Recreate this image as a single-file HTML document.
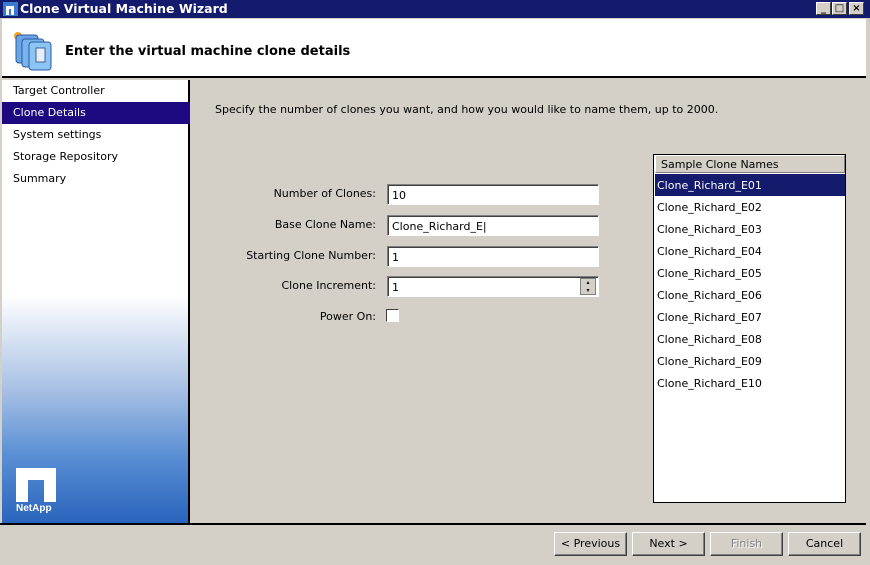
<!DOCTYPE html>
<html><head><style>
*{margin:0;padding:0;box-sizing:border-box}
body{width:870px;height:565px;background:#d4d0c8;font-family:"DejaVu Sans","Liberation Sans",sans-serif;font-size:11px;position:relative;overflow:hidden;color:#000}
.a{position:absolute}
.tb{left:0;top:0;width:870px;height:18px;background:#141a6c;color:#fff;font-weight:bold;font-size:12.5px;line-height:18px;padding-left:20px}
.wb{top:2px;width:15px;height:13px;background:#d4d0c8;border:1px solid;border-color:#fff #404040 #404040 #fff;font-size:10px;color:#000;text-align:center;line-height:11px;font-weight:bold}
.hdr{left:2px;top:19px;width:864px;height:59px;background:#fff;border-bottom:2px solid #000}
.side{left:2px;top:80px;width:188px;height:443px;background:linear-gradient(#fff 0,#fff 215px,#a7c0e4 310px,#5a8fd4 375px,#2a65bd 443px);border-right:2px solid #000}
.it{left:2px;width:188px;height:22px;line-height:22px;padding-left:11px}
.lbl{text-align:right;width:150px;left:226px}
.in{left:387px;width:212px;height:21px;background:#fff;border:1px solid;border-color:#808080 #fff #fff #808080;box-shadow:inset 1px 1px 0 #404040;padding:4px 0 0 4px}
.btn{top:532px;width:73px;height:24px;border:1px solid;border-color:#fff #404040 #404040 #fff;box-shadow:inset -1px -1px 0 #808080;text-align:center;line-height:22px}
.li{left:655px;width:190px;height:22px;line-height:24px;padding-left:2px}
</style></head><body>
<div class="a tb">Clone Virtual Machine Wizard</div>
<svg class="a" style="left:3px;top:2px" width="15" height="14"><rect width="15" height="14" fill="#3a7ad0"/><path d="M3 13V4h8v9H8V7H6v6z" fill="#fff"/></svg>
<div class="a wb" style="left:816px">_</div>
<div class="a wb" style="left:832px">□</div>
<div class="a wb" style="left:849px">×</div>
<div class="a" style="left:866px;top:18px;width:4px;height:547px;background:#d4d0c8"></div>
<div class="a hdr"></div>
<svg class="a" style="left:12px;top:30px" width="42" height="42">
<circle cx="6" cy="6" r="4" fill="#f4a020"/>
<rect x="4" y="5" width="22" height="28" rx="3" fill="#6aa4e4" stroke="#2a5aa0"/>
<rect x="10" y="9" width="22" height="28" rx="3" fill="#7ab4ee" stroke="#2a5aa0"/>
<rect x="17" y="12" width="22" height="28" rx="3" fill="#8cc4f4" stroke="#2a5aa0"/>
<rect x="24" y="18" width="9" height="14" fill="#e8eef8" stroke="#406090"/></svg>
<div class="a" style="left:65px;top:44px;font-size:13px;font-weight:bold">Enter the virtual machine clone details</div>
<div class="a side"></div>
<div class="a it" style="top:80px">Target Controller</div>
<div class="a it" style="top:102px;background:#1e0a80;color:#fff">Clone Details</div>
<div class="a it" style="top:124px">System settings</div>
<div class="a it" style="top:146px">Storage Repository</div>
<div class="a it" style="top:168px">Summary</div>
<svg class="a" style="left:16px;top:468px" width="40" height="34"><path d="M0 0h40v34H28V12H12v22H0z" fill="#fff"/></svg>
<div class="a" style="left:16px;top:503px;color:#fff;font-weight:bold;font-size:10px;font-family:'Liberation Sans',sans-serif">NetApp</div>
<div class="a" style="left:0;top:523px;width:866px;height:2px;background:#000"></div>
<div class="a" style="left:215px;top:103px">Specify the number of clones you want, and how you would like to name them, up to 2000.</div>
<div class="a lbl" style="top:187px">Number of Clones:</div>
<div class="a lbl" style="top:218px">Base Clone Name:</div>
<div class="a lbl" style="top:249px">Starting Clone Number:</div>
<div class="a lbl" style="top:279px">Clone Increment:</div>
<div class="a lbl" style="top:310px">Power On:</div>
<div class="a in" style="top:184px">10</div>
<div class="a in" style="top:215px">Clone_Richard_E|</div>
<div class="a in" style="top:246px">1</div>
<div class="a in" style="top:276px">1</div>
<div class="a" style="left:580px;top:278px;width:16px;height:17px;background:#d4d0c8;border:1px solid #808080;font-size:6px;text-align:center;line-height:8px">▴<br>▾</div>
<div class="a" style="left:386px;top:309px;width:13px;height:13px;background:#fff;border:1px solid;border-color:#404040 #fff #fff #404040"></div>
<div class="a" style="left:653px;top:154px;width:193px;height:349px;background:#fff;border:1px solid #000"></div>
<div class="a" style="left:655px;top:155px;width:190px;height:18px;background:#d4d0c8;border:1px solid;border-color:#fff #808080 #808080 #fff;line-height:18px;padding-left:5px">Sample Clone Names</div>
<div class="a li" style="top:174px;background:#141a6c;color:#fff">Clone_Richard_E01</div>
<div class="a li" style="top:196px">Clone_Richard_E02</div>
<div class="a li" style="top:218px">Clone_Richard_E03</div>
<div class="a li" style="top:240px">Clone_Richard_E04</div>
<div class="a li" style="top:262px">Clone_Richard_E05</div>
<div class="a li" style="top:284px">Clone_Richard_E06</div>
<div class="a li" style="top:306px">Clone_Richard_E07</div>
<div class="a li" style="top:328px">Clone_Richard_E08</div>
<div class="a li" style="top:350px">Clone_Richard_E09</div>
<div class="a li" style="top:372px">Clone_Richard_E10</div>
<div class="a btn" style="left:554px">&lt; Previous</div>
<div class="a btn" style="left:632px">Next &gt;</div>
<div class="a btn" style="left:710px;color:#808080;text-shadow:1px 1px 0 #fff">Finish</div>
<div class="a btn" style="left:788px">Cancel</div>
</body></html>
